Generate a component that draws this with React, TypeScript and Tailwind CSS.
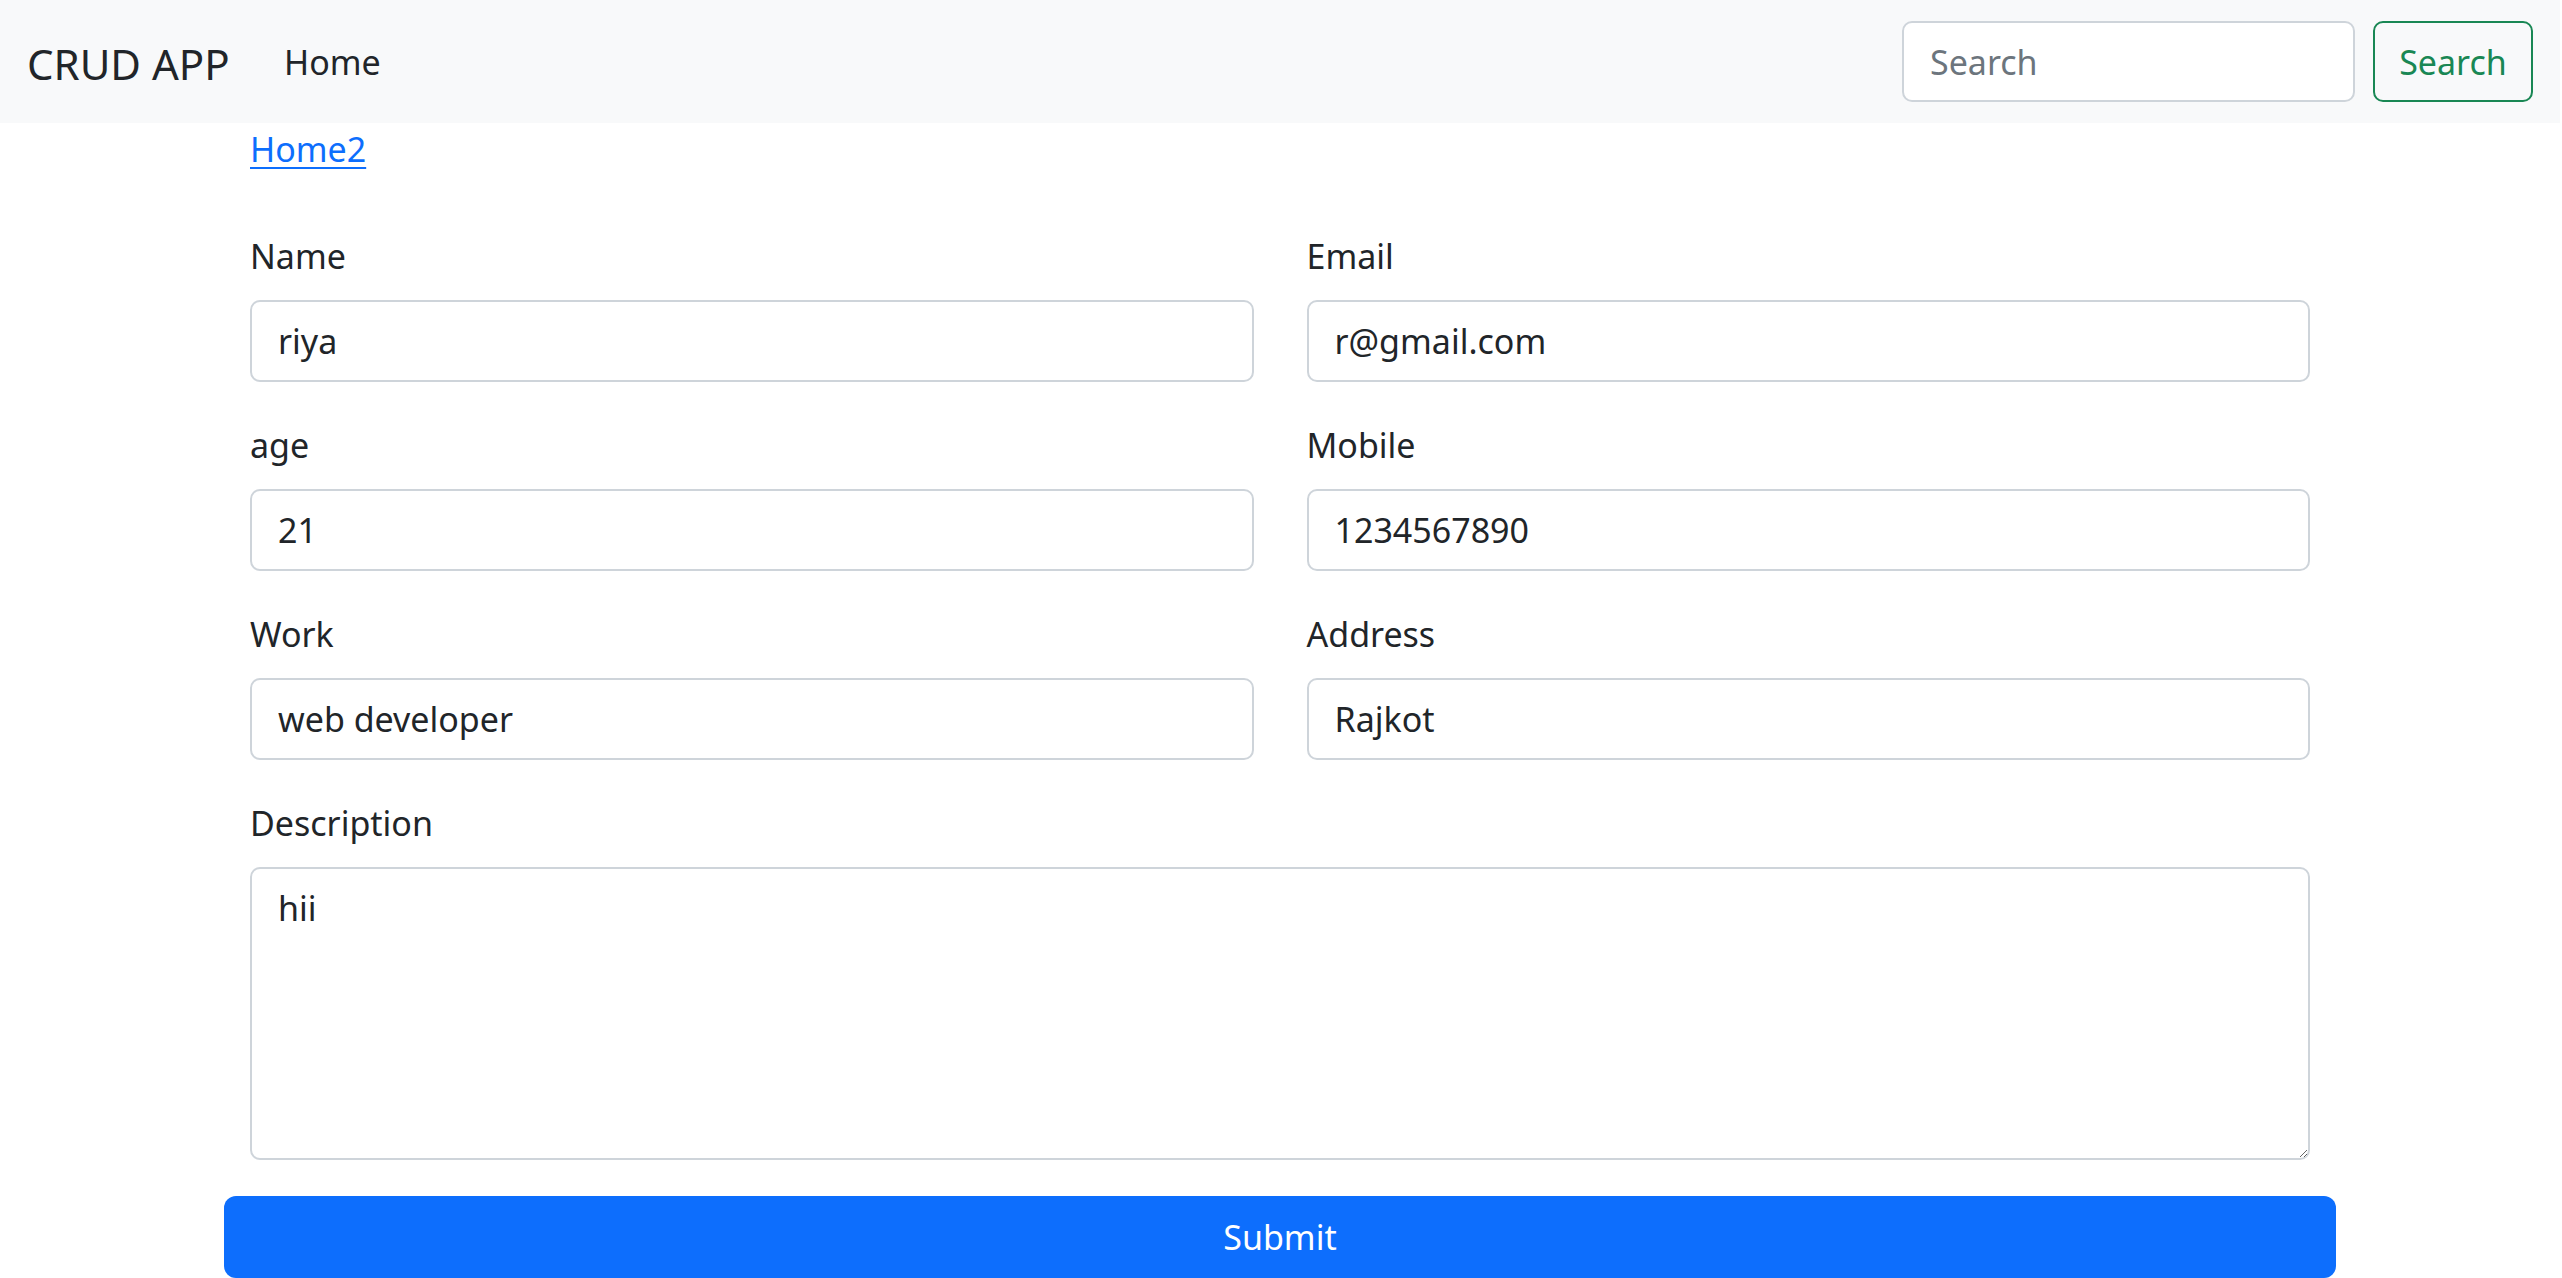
import React from "react";

const inputCls =
  "block w-full h-[82px] border-2 border-[#ced4da] rounded-[10px] bg-white px-[26px] py-[13px] text-[34px] leading-[52px] text-[#212529] outline-none";

function Field({ label, value }: { label: string; value: string }) {
  return (
    <div className="mb-[38px]">
      <label className="block text-[34px] leading-[51px] mb-[18px] text-[#212529]">{label}</label>
      <input type="text" defaultValue={value} className={inputCls} />
    </div>
  );
}

export default function App() {
  return (
    <div className="w-[2560px] min-h-screen bg-white text-[#212529] font-['Segoe_UI','Noto_Sans',sans-serif]">
      <nav className="h-[123px] bg-[#f8f9fa] flex items-center pl-[27px] pr-[27px]">
        <span className="w-[257px] pt-[5px] text-[42px] leading-none text-[#212529] whitespace-nowrap">CRUD APP</span>
        <a href="#" className="text-[34px] leading-none text-[#212529]">Home</a>
        <form className="ml-auto flex items-center gap-[18px]" onSubmit={(e) => e.preventDefault()}>
          <input
            type="search"
            placeholder="Search"
            className="w-[453px] h-[81px] border-2 border-[#ced4da] rounded-[10px] bg-white px-[26px] text-[34px] leading-[52px] text-[#212529] placeholder:text-[#6c757d] outline-none"
          />
          <button
            type="submit"
            className="w-[160px] h-[81px] border-2 border-[#198754] rounded-[10px] text-[34px] leading-[52px] text-[#198754] bg-transparent"
          >
            Search
          </button>
        </form>
      </nav>
      <div className="w-[2112px] mx-auto">
        <div className="pl-[26px] mt-[1px]">
          <a href="#" className="inline-block text-[34px] leading-[51px] text-[#0d6efd] underline decoration-[2px] underline-offset-[5px]">Home2</a>
        </div>
        <form onSubmit={(e) => e.preventDefault()} className="pt-[56px]">
          <div className="grid grid-cols-2 gap-x-[53px] px-[26px]">
            <Field label="Name" value="riya" />
            <Field label="Email" value="r@gmail.com" />
            <Field label="age" value="21" />
            <Field label="Mobile" value="1234567890" />
            <Field label="Work" value="web developer" />
            <Field label="Address" value="Rajkot" />
            <div className="col-span-2">
              <label className="block text-[34px] leading-[51px] mb-[18px] text-[#212529]">Description</label>
              <textarea
                defaultValue="hii"
                className="block w-full h-[293px] border-2 border-[#ced4da] rounded-[10px] bg-white px-[26px] py-[13px] text-[34px] leading-[52px] text-[#212529] outline-none"
              />
            </div>
          </div>
          <button
            type="submit"
            className="mt-[36px] block w-full h-[82px] rounded-[12px] bg-[#0d6efd] text-white text-[34px] leading-[52px]"
          >
            Submit
          </button>
        </form>
      </div>
    </div>
  );
}
